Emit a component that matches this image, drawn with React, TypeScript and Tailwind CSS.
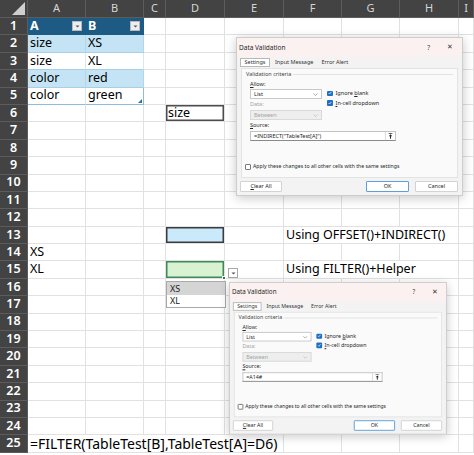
import React from 'react';

const COLS = ['A', 'B', 'C', 'D', 'E', 'F', 'G', 'H', 'I'];
const ROW_COUNT = 25;

type Cell = { span?: number; text?: React.ReactNode; cls?: string };

const lightBlue = 'bg-[#c4e4f5] border-r-[#b3d6ea] border-b-[#a9cfe6]';
const tableWhite = 'bg-white border-b-[#a9cfe6] border-r-[#d6e8f3]';

function FilterButton() {
  return (
    <span className="ml-auto mr-[1px] w-[10px] h-[10px] bg-[#eeeeee] border border-[#b9b9b9] flex items-center justify-center">
      <svg width="5" height="3" viewBox="0 0 5 3">
        <path d="M0.5 0.5 L4.5 0.5 L2.5 2.6 Z" fill="#555" />
      </svg>
    </span>
  );
}

// contents of the sheet, keyed by "row-col" (col 1 = A)
const cells: Record<string, Cell> = {
  '1-1': { text: <><span className="font-bold">A</span><FilterButton /></>, cls: 'bg-[#1d5a84] text-white border-r-[#1d5a84] border-b-[#1d5a84]' },
  '1-2': { text: <><span className="font-bold">B</span><FilterButton /></>, cls: 'bg-[#1d5a84] text-white border-r-[#1d5a84] border-b-[#1d5a84]' },
  '2-1': { text: 'size', cls: lightBlue },
  '2-2': { text: 'XS', cls: `${lightBlue} border-r-[#8dbcdc]` },
  '3-1': { text: 'size', cls: tableWhite },
  '3-2': { text: 'XL', cls: `${tableWhite} border-r-[#8dbcdc]` },
  '4-1': { text: 'color', cls: lightBlue },
  '4-2': { text: 'red', cls: `${lightBlue} border-r-[#8dbcdc]` },
  '5-1': { text: 'color', cls: 'bg-white border-b-[#8dbcdc] border-r-[#d6e8f3]' },
  '5-2': {
    text: (
      <>
        green
        <span className="absolute right-[1px] bottom-[1px] w-0 h-0 border-l-[4px] border-l-transparent border-b-[4px] border-b-[#2f6ea8]" />
      </>
    ),
    cls: 'bg-white border-b-[#8dbcdc] border-r-[#8dbcdc]',
  },
  '6-4': { text: 'size', cls: 'shadow-[inset_0_0_0_1.5px_#4d4d4d]' },
  '13-4': { text: '', cls: 'bg-[#cae9fb] shadow-[inset_0_0_0_1.5px_#3c3c3c]' },
  '13-6': { span: 3, text: 'Using OFFSET()+INDIRECT()', cls: 'pl-[2px]' },
  '14-1': { text: 'XS' },
  '15-1': { text: 'XL' },
  '15-4': {
    text: <span className="absolute -right-[2px] -bottom-[2px] w-[4px] h-[4px] bg-[#2b7a4b] border border-white" />,
    cls: 'bg-[#d9f2d1] shadow-[inset_0_0_0_1.5px_#3d8a5c] z-10',
  },
  '15-6': { span: 3, text: 'Using FILTER()+Helper', cls: 'pl-[2px]' },
  '25-1': { span: 5, text: '=FILTER(TableTest[B],TableTest[A]=D6)', cls: 'text-[14px]' },
};

function Chevron({ color = '#707070' }: { color?: string }) {
  return (
    <svg width="5" height="3" viewBox="0 0 5 3">
      <path d="M0.5 0.5 L2.5 2.5 L4.5 0.5" fill="none" stroke={color} strokeWidth="0.6" />
    </svg>
  );
}

function Checked() {
  return (
    <span className="w-[5.5px] h-[5.5px] rounded-[1px] bg-[#1f6fc6] flex items-center justify-center shrink-0">
      <svg width="4" height="4" viewBox="0 0 4 4">
        <path d="M0.6 2 L1.6 3 L3.4 0.9" fill="none" stroke="white" strokeWidth="0.7" />
      </svg>
    </span>
  );
}

function ValidationDialog({ source, className }: { source: string; className: string }) {
  return (
    <div
      className={`absolute w-[227px] h-[159px] bg-[#f3f3f3] border border-[#cdcdcd] shadow-[0_2px_10px_rgba(0,0,0,0.22)] flex flex-col text-[#262626] font-['Noto_Sans',sans-serif] ${className}`}
    >
      {/* title bar */}
      <div className="h-[19px] shrink-0 bg-[#fcf1f1] flex items-center pl-[2px] pr-[9px]">
        <span className="text-[6.5px]">Data Validation</span>
        <span className="ml-auto text-[6.5px] text-[#444]">?</span>
        <span className="ml-[17px] text-[7px] text-[#333]">✕</span>
      </div>

      {/* tabs */}
      <div className="h-[11px] shrink-0 flex items-start pt-[1px] pl-[3px] text-[5.5px] text-[#333]">
        <span className="w-[30px] h-[9px] bg-white border border-[#b8b8b8] flex items-center justify-center">Settings</span>
        <span className="ml-[5px] h-[9px] flex items-center">Input Message</span>
        <span className="ml-[8px] h-[9px] flex items-center">Error Alert</span>
      </div>

      {/* settings panel */}
      <div className="mx-[4px] h-[110px] shrink-0 bg-[#fafafa] border border-[#e3e3e3] flex flex-col text-[5.5px]">
        <div className="h-[10px] flex items-center pl-[4px] pr-[4px] gap-[2px] text-[#444]">
          <span>Validation criteria</span>
          <span className="flex-1 h-px bg-[#e2e2e2]" />
        </div>
        <div className="flex pl-[8px]">
          <div className="w-[72px] flex flex-col">
            <div className="h-[10px] flex items-center">
              <u>A</u>llow:
            </div>
            <div className="h-[10px] bg-white border border-[#c8c8c8] flex items-center pl-[3px] pr-[3px]">
              <span>List</span>
              <span className="ml-auto flex">
                <Chevron />
              </span>
            </div>
            <div className="h-[11px] flex items-center text-[#a3a3a3]">Data:</div>
            <div className="h-[10px] bg-[#eeeeee] border border-[#d9d9d9] flex items-center pl-[3px] pr-[3px] text-[#a3a3a3]">
              <span>Between</span>
              <span className="ml-auto flex">
                <Chevron color="#b0b0b0" />
              </span>
            </div>
          </div>
          <div className="ml-[5px] pt-[9.5px] flex flex-col">
            <div className="h-[9.5px] flex items-center gap-[3px]">
              <Checked />
              <span>
                Ignore <u>b</u>lank
              </span>
            </div>
            <div className="h-[9.5px] flex items-center gap-[3px]">
              <Checked />
              <span>
                <u>I</u>n-cell dropdown
              </span>
            </div>
          </div>
        </div>
        <div className="pl-[8px] h-[11px] flex items-center">
          <u>S</u>ource:
        </div>
        <div className="ml-[8px] w-[146px] h-[10px] bg-white border border-[#c4c4c4] border-b-[#8a8a8a] flex items-center pl-[3px]">
          <span>{source}</span>
          <span className="ml-auto w-[10px] h-full border-l border-[#dcdcdc] flex items-center justify-center">
            <svg width="5" height="6" viewBox="0 0 5 6">
              <rect x="0.6" y="0.2" width="3.8" height="0.7" fill="#222" />
              <path d="M0.8 3.2 L2.5 1.3 L4.2 3.2 Z" fill="#222" />
              <rect x="2" y="3.1" width="1" height="2.6" fill="#222" />
            </svg>
          </span>
        </div>
        <div className="mt-auto mb-[7px] pl-[3px] h-[6px] flex items-center gap-[2px] text-[5.2px]">
          <span className="w-[6px] h-[6px] bg-white border border-[#7a7a7a] rounded-[1px] shrink-0" />
          <span>Apply these changes to all other cells with the same settings</span>
        </div>
      </div>

      {/* buttons */}
      <div className="mt-[3px] h-[11px] shrink-0 flex pl-[3px] pr-[4px] text-[5.5px]">
        <span className="w-[42px] h-full bg-white border border-[#d3d3d3] rounded-[1px] flex items-center justify-center">
          <span>
            <u>C</u>lear All
          </span>
        </span>
        <span className="ml-auto w-[43px] h-full bg-white border border-[#5f9fd8] rounded-[1px] flex items-center justify-center">OK</span>
        <span className="ml-[6px] w-[43px] h-full bg-white border border-[#d3d3d3] rounded-[1px] flex items-center justify-center">Cancel</span>
      </div>
    </div>
  );
}

export default function App() {
  const rows: React.ReactNode[] = [];

  for (let r = 1; r <= ROW_COUNT; r++) {
    rows.push(
      <div
        key={`h${r}`}
        className="bg-[#434343] border-r border-b border-[#5c5c5c] text-white text-[12.5px] font-semibold flex items-center justify-center"
      >
        {r}
      </div>
    );
    let c = 1;
    while (c <= COLS.length) {
      const cell = cells[`${r}-${c}`];
      const span = cell?.span ?? 1;
      const spanCls = span === 3 ? 'col-span-3' : span === 5 ? 'col-span-5' : '';
      rows.push(
        <div
          key={`${r}-${c}`}
          className={`relative border-r border-b border-[#e1e1e1] flex items-center px-[2px] text-[12.5px] text-black whitespace-nowrap ${spanCls} ${cell?.cls ?? ''}`}
        >
          {cell?.text}
        </div>
      );
      c += span;
    }
  }

  return (
    <div className="relative w-[474px] h-[455px] overflow-hidden bg-white font-['Noto_Sans',sans-serif]">
      <div className="grid h-full grid-cols-[28px_58px_58px_22px_59px_59px_58px_58px_59px_1fr] grid-rows-[18px_repeat(25,17.4px)_1fr]">
        {/* corner */}
        <div className="relative bg-[#434343] border-r border-b border-[#5c5c5c]">
          <span className="absolute right-[2px] bottom-[2px] w-0 h-0 border-l-[13px] border-l-transparent border-b-[13px] border-b-[#cfcfcf]" />
        </div>
        {COLS.map((col) => (
          <div
            key={col}
            className="bg-[#434343] border-r border-b border-[#5c5c5c] text-[#d6d6d6] text-[11px] flex items-center justify-center"
          >
            {col}
          </div>
        ))}
        {rows}
      </div>

      {/* in-cell dropdown for D15 */}
      <div className="absolute left-[228px] top-[268px] w-[10px] h-[10px] bg-white border border-[#a8a8a8] flex items-center justify-center">
        <svg width="5" height="3" viewBox="0 0 5 3">
          <path d="M0.5 0.5 L4.5 0.5 L2.5 2.6 Z" fill="#555" />
        </svg>
      </div>
      <div className="absolute left-[166px] top-[281px] w-[60px] h-[27px] bg-white border border-[#a9a9a9] flex flex-col text-[9px] text-[#222]">
        <div className="h-[13px] bg-[#d5d5d5] flex items-center pl-[3px]">XS</div>
        <div className="h-[12px] flex items-center pl-[3px]">XL</div>
      </div>

      <ValidationDialog source={'=INDIRECT("TableTest[A]")'} className="left-[236px] top-[37px]" />
      <ValidationDialog source="=A14#" className="left-[229px] top-[282px] origin-top-left scale-[0.96]" />
    </div>
  );
}
